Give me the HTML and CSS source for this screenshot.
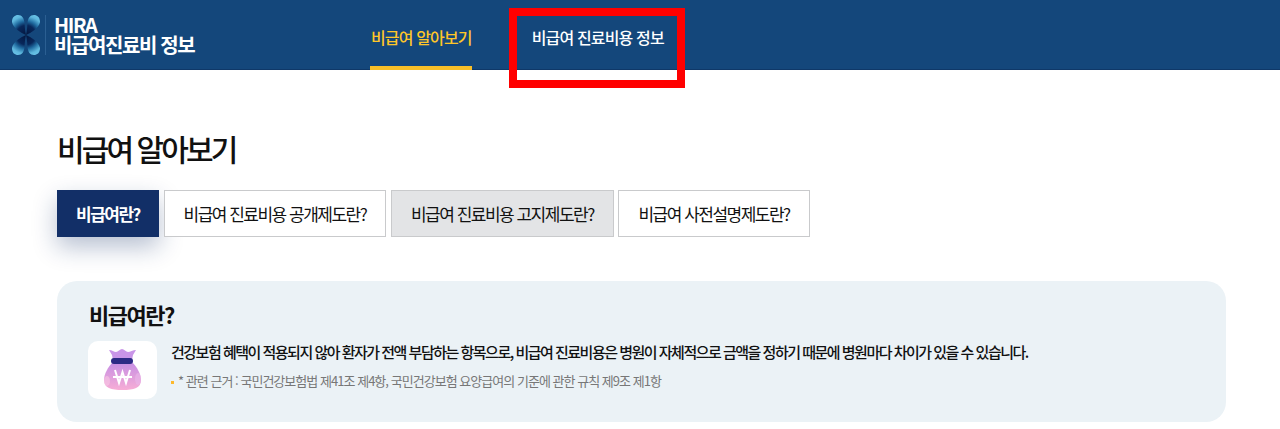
FILE: index.html
```html
<!DOCTYPE html>
<html lang="ko">
<head>
<meta charset="utf-8">
<title>비급여 알아보기</title>
<link rel="stylesheet" href="styles.css">
</head>
<body>
<header class="header">
  <a class="logo">
    <svg class="logo-mark" width="28" height="40" viewBox="0 0 28 40">
      <defs>
        <radialGradient id="lg" gradientUnits="userSpaceOnUse" cx="14" cy="20" r="23">
          <stop offset="0" stop-color="#04173f"/>
          <stop offset=".42" stop-color="#08275a"/>
          <stop offset=".6" stop-color="#1f6a9f"/>
          <stop offset=".82" stop-color="#5fb8de"/>
          <stop offset="1" stop-color="#6cc4e8"/>
        </radialGradient>
      </defs>
      <g fill="url(#lg)">
        <path d="M14 20C9 18 1 13 0 7 0 2 3 0 6 0c4 0 6 3 6.500 8 .3 4 .5 8 1.500 12z"/>
        <path d="M14 20c5-2 13-7 14-13 0-5-3-7-6-7-4 0-6 3-6.500 8-.3 4-.5 8-1.500 12z"/>
        <path d="M14 20C9 22 1 27 0 33c0 5 3 7 6 7 4 0 6-3 6.500-8 .3-4 .5-8 1.500-12z"/>
        <path d="M14 20c5 2 13 7 14 13 0 5-3 7-6 7-4 0-6-3-6.500-8-.3-4-.5-8-1.500-12z"/>
      </g>
    </svg>
    <span class="logo-sep"></span>
    <span class="logo-text">HIRA<br>비급여진료비 정보</span>
  </a>
  <nav class="nav">
    <a class="nav-item nav-item-active">비급여 알아보기</a>
    <a class="nav-item">비급여 진료비용 정보</a>
  </nav>
</header>
<div class="highlight"></div>
<main class="main">
  <h1 class="title">비급여 알아보기</h1>
  <div class="tabs">
    <a class="tab tab-active">비급여란?</a>
    <a class="tab tab-wide">비급여 진료비용 공개제도란?</a>
    <a class="tab tab-wide tab-hover">비급여 진료비용 고지제도란?</a>
    <a class="tab tab-wide">비급여 사전설명제도란?</a>
  </div>
  <section class="card">
    <h2 class="card-title">비급여란?</h2>
    <div class="card-body">
      <div class="icon-box">
        <svg width="38" height="42" viewBox="0 0 38 42">
          <defs>
            <linearGradient id="bag" x1="0" y1="0" x2="0" y2="1">
              <stop offset="0" stop-color="#c58ee4"/>
              <stop offset="1" stop-color="#f7add6"/>
            </linearGradient>
          </defs>
          <path fill="#c995e8" d="M5 1c3 0 5 2 7 2 2 0 4-3 6-3s4 3 6 3 5-2 8-2l-3 5-1 5H9L8 6z"/>
          <path fill="url(#bag)" d="M9 13h19c5 5 9 12 9 18 0 8-7 10-18.500 10S0 39 0 31c0-6 4-13 9-18z"/>
          <ellipse cx="3" cy="32" rx="3" ry="5" fill="#f9c8e4" opacity=".6"/>
          <ellipse cx="34" cy="30" rx="3" ry="6" fill="#e9b8ea" opacity=".6"/>
          <rect x="7" y="9" width="22" height="6" rx="3" fill="#2c2a85"/>
          <path fill="none" stroke="#fff" stroke-width="2" d="M11 21l4 13 3.500-11 3.500 11 4-13M9 28h19"/>
        </svg>
      </div>
      <div class="card-text">
        <p class="desc">건강보험 혜택이 적용되지 않아 환자가 전액 부담하는 항목으로, 비급여 진료비용은 병원이 자체적으로 금액을 정하기 때문에 병원마다 차이가 있을 수 있습니다.</p>
        <p class="note">* 관련 근거 : 국민건강보험법 제41조 제4항, 국민건강보험 요양급여의 기준에 관한 규칙 제9조 제1항</p>
      </div>
    </div>
  </section>
</main>
</body>
</html>
```
FILE: styles.css
```css
* { box-sizing: border-box; margin: 0; padding: 0; }
html, body { height: 429px; overflow: hidden; }
body {
  position: relative;
  background: #fff;
  color: #111;
  font-family: "Noto Sans CJK KR", "Noto Sans", sans-serif;
}
.header {
  display: flex;
  align-items: stretch;
  height: 70px;
  background: #14477b;
  border-bottom: 1px solid #0f3868;
  padding-left: 12px;
}
.logo {
  display: flex;
  align-items: center;
  width: 358px;
  color: #fff;
}
.logo-mark { flex: none; }
.logo-sep {
  flex: none;
  width: 1px;
  height: 40px;
  margin-left: 5px;
  background: #2b5f92;
}
.logo-text {
  margin-left: 8px;
  font-size: 20px;
  font-weight: 700;
  line-height: 20px;
  letter-spacing: -1.4px;
}
.nav { display: flex; gap: 59px; }
.nav-item {
  display: flex;
  align-items: center;
  height: 70px;
  padding: 8px 0 0 1px;
  color: #fff;
  font-size: 16px;
  font-weight: 500;
  letter-spacing: -0.85px;
  border-bottom: 4px solid transparent;
  white-space: nowrap;
}
.nav-item-active {
  color: #fdc629;
  border-bottom-color: #f8bf28;
}
.highlight {
  position: absolute;
  left: 509px;
  top: 8px;
  width: 176px;
  height: 80px;
  border: 8px solid #ff0000;
}
.main { padding: 56px 54px 0 57px; }
.title {
  font-size: 30px;
  font-weight: 500;
  line-height: 44px;
  letter-spacing: -2.9px;
  color: #111;
}
.tabs { display: flex; gap: 4.7px; margin-top: 20px; }
.tab {
  display: flex;
  align-items: center;
  justify-content: center;
  height: 47px;
  padding: 0 19px;
  font-size: 17px;
  letter-spacing: -1.5px;
  background: #fff;
  border: 1px solid #c9cacc;
  white-space: nowrap;
}
.tab-active {
  padding: 0 18px;
  background: #122f67;
  border-color: #122f67;
  color: #fff;
  font-weight: 700;
  box-shadow: 0 10px 24px rgba(18, 47, 103, .3);
}
.tab-hover { background: #e3e4e6; }
.card {
  margin-top: 44px;
  height: 141px;
  padding: 17px 32px;
  background: #ebf2f6;
  border-radius: 20px;
}
.card-title {
  font-size: 22px;
  font-weight: 700;
  line-height: 32px;
  letter-spacing: -1.5px;
  color: #111;
}
.card-body { display: flex; gap: 14px; margin-top: 11px; margin-left: -1px; }
.icon-box {
  display: flex;
  align-items: center;
  justify-content: center;
  flex: none;
  width: 69px;
  height: 58px;
  background: #fff;
  border-radius: 10px;
}
.desc {
  font-size: 15px;
  font-weight: 500;
  line-height: 22px;
  letter-spacing: -1.5px;
  color: #111;
}
.note {
  position: relative;
  margin-top: 8px;
  padding-left: 7px;
  font-size: 13px;
  line-height: 20px;
  letter-spacing: -0.97px;
  color: #777;
}
.note::before {
  content: "";
  position: absolute;
  left: 0;
  top: 10px;
  width: 3px;
  height: 3px;
  background: #fdb92c;
}
```
